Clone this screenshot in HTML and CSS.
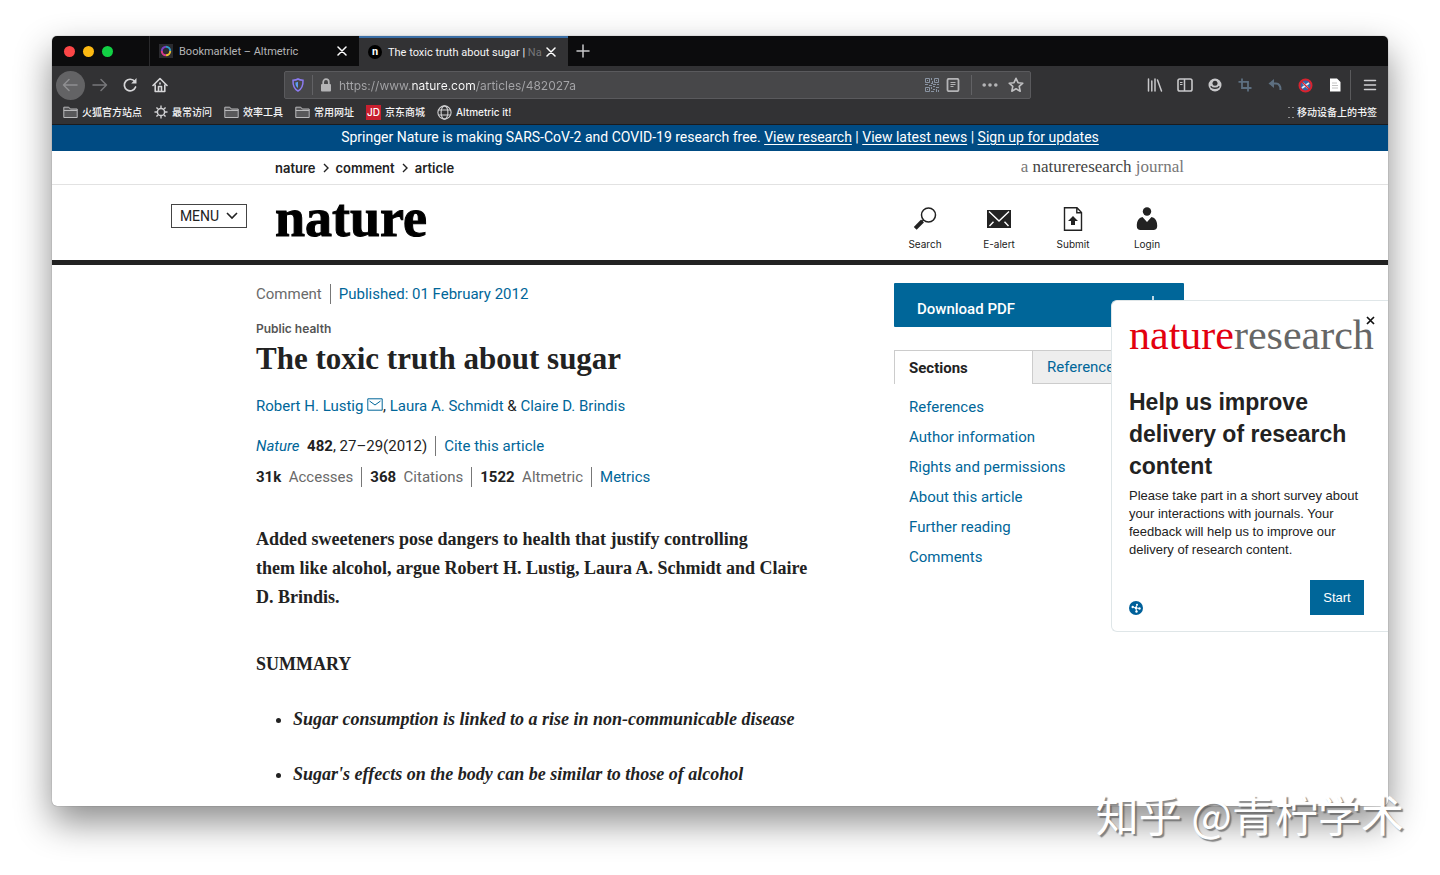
FILE: index.html
```html
<!DOCTYPE html>
<html lang="en">
<head>
<meta charset="utf-8">
<title>The toxic truth about sugar | Nature</title>
<link rel="stylesheet" href="styles.css">
</head>
<body>
<div class="window">
  <div class="tabstrip">
    <div class="lights"><span class="light red"></span><span class="light yellow"></span><span class="light green"></span></div>
    <div class="tab">
      <svg class="favicon" viewBox="0 0 14 14"><rect width="14" height="14" fill="#2b2b2f"/><g fill="none" stroke-width="2"><path d="M7 2.8A4.2 4.2 0 0 1 11.2 7" stroke="#2d9cc9"/><path d="M11.2 7A4.2 4.2 0 0 1 7 11.2" stroke="#e9c130"/><path d="M7 11.2A4.2 4.2 0 0 1 2.8 7" stroke="#d63b8b"/><path d="M2.8 7A4.2 4.2 0 0 1 7 2.8" stroke="#7a3fc0"/></g></svg>
      <button class="tab-title">Bookmarklet – Altmetric</button>
      <button class="close" aria-label="Close tab"><svg width="10" height="10" viewBox="0 0 10 10"><path d="M1 1l8 8M9 1L1 9" stroke="#fff" stroke-width="1.5" stroke-linecap="round"/></svg></button>
    </div>
    <div class="tab active">
      <span class="favicon nature-dot">n</span>
      <button class="tab-title">The toxic truth about sugar | <span class="fade">Na</span></button>
      <button class="close" aria-label="Close tab"><svg width="10" height="10" viewBox="0 0 10 10"><path d="M1 1l8 8M9 1L1 9" stroke="#fff" stroke-width="1.5" stroke-linecap="round"/></svg></button>
    </div>
    <button class="newtab" aria-label="New tab"><svg width="14" height="14" viewBox="0 0 14 14"><path d="M7 1v12M1 7h12" stroke="#c8c8ca" stroke-width="1.5" stroke-linecap="round"/></svg></button>
  </div>

  <div class="toolbar">
    <button class="tool" aria-label="Back"><span class="back"><svg width="16" height="16" viewBox="0 0 16 16" fill="none" stroke="#8f8f91" stroke-width="1.5" stroke-linecap="round" stroke-linejoin="round"><path d="M15 8H1.5M7 2.5L1.5 8 7 13.500"/></svg></span></button>
    <button class="tool" aria-label="Forward"><svg width="16" height="16" viewBox="0 0 16 16" fill="none" stroke="#77777a" stroke-width="1.5" stroke-linecap="round" stroke-linejoin="round"><path d="M1 8h13.500M9 2.500L14.500 8 9 13.500"/></svg></button>
    <button class="tool" aria-label="Reload"><svg width="16" height="16" viewBox="0 0 16 16" fill="none" stroke="#d6d6d8" stroke-width="1.700" stroke-linecap="round"><path d="M12.800 4.600A5.800 5.800 0 1 0 13.600 10"/><path d="M14.500 1v5.500H9.200z" fill="#d6d6d8" stroke="none"/></svg></button>
    <button class="tool" aria-label="Home"><svg width="16" height="16" viewBox="0 0 16 16" fill="none" stroke="#d6d6d8" stroke-width="1.600" stroke-linejoin="round" stroke-linecap="round"><path d="M1 8.500L8 1.500l7 7M3.200 8v6.500h9.600V8"/><path d="M6.500 14V9.500h3V14M8 6v1" /></svg></button>
    <div class="urlbar">
      <svg width="14" height="14" viewBox="0 0 14 14" fill="none"><path d="M7 1c1.600 1 3.300 1.200 5 1.300C12.200 7 11 11 7 13 3 11 1.800 7 2 2.300 3.700 2.200 5.400 2 7 1z" stroke="#8c7bf0" stroke-width="1.500"/><path d="M7 3.800v6.200C5 8.800 4.400 7 4.400 4.500c1-.1 1.800-.3 2.600-.7z" fill="#5c9df5"/></svg>
      <span class="bar"></span>
      <svg width="12" height="14" viewBox="0 0 12 14"><rect x="1" y="6" width="10" height="7.500" rx="1" fill="#b4b4b6"/><path d="M3.200 6V4a2.800 2.800 0 0 1 5.600 0v2" fill="none" stroke="#b4b4b6" stroke-width="1.700"/></svg>
      <input class="url" type="text" aria-label="Address" value="https://www.nature.com/articles/482027a">
      <svg width="14" height="14" viewBox="0 0 14 14" fill="none" stroke="#8a94a3" stroke-width="1"><path d="M.5.500h4v4h-4zM9.500.500h4v4h-4zM.5 9.500h4v4h-4zM2 2.500h1M11 2.500h1M2 11.500h1M6.500 0v2M7.500 3v2M6 5.500h2M0 6.500h3M4 7.500h3M8 6.500h3M12 6.500h2M6.500 9v2M8 8.500h2M11 9.500h3M8 11.500h2M11.500 11v3M6 13.500h3M13.500 12v2"/></svg>
      <svg class="doc" width="14" height="14" viewBox="0 0 14 14" fill="none" stroke="#b4b4b6"><rect x="1.500" y=".8" width="11" height="12.400" rx="1.500" stroke-width="1.800"/><path d="M4.500 4.500h5M4.500 6.500h5M4.500 8.500h3" stroke-width="1.200"/></svg>
      <span class="bar"></span>
      <svg class="dots" width="16" height="14" viewBox="0 0 16 14" fill="#b4b4b6"><circle cx="2.200" cy="7" r="1.800"/><circle cx="8" cy="7" r="1.800"/><circle cx="13.800" cy="7" r="1.800"/></svg>
      <svg width="16" height="16" viewBox="0 0 16 16" fill="none" stroke="#c0c0c2" stroke-width="1.600" stroke-linejoin="round"><path d="M8 1.300l2 4.400 4.800.5-3.600 3.200 1 4.800L8 11.800l-4.200 2.400 1-4.800L1.200 6.200 6 5.700z"/></svg>
    </div>
    <button class="tool" aria-label="Library"><svg width="16" height="14" viewBox="0 0 16 14" fill="none" stroke="#c8c8ca" stroke-width="1.500" stroke-linecap="round"><path d="M1.500 1v12M4.800 3v10M8 1v12M10.500 2l4 11"/></svg></button>
    <button class="tool" aria-label="Sidebars"><svg width="16" height="14" viewBox="0 0 16 14" fill="none" stroke="#c8c8ca"><rect x="1" y="1" width="14" height="12" rx="1.800" stroke-width="1.600"/><path d="M7.500 1v12" stroke-width="1.500"/><path d="M3 4.500h2.500M3 6.500h2.500" stroke-width="1"/></svg></button>
    <button class="tool" aria-label="Account"><svg width="14" height="14" viewBox="0 0 14 14"><circle cx="7" cy="7" r="6.500" fill="#c8c8ca"/><circle cx="7" cy="5.300" r="2.500" fill="#323234"/><path d="M2.800 8.300c1 2.600 7.400 2.600 8.400 0" fill="none" stroke="#323234" stroke-width="1.300"/></svg></button>
    <button class="tool" aria-label="Crop"><svg width="14" height="14" viewBox="0 0 14 14" fill="none" stroke="#5d6f80" stroke-width="1.800"><path d="M4 .5V10h9.500M.5 3.800H10v9.700"/></svg></button>
    <button class="tool" aria-label="Undo"><svg width="14" height="14" viewBox="0 0 14 14"><path d="M6 1L.5 5.500 6 10z" fill="#5d6f80"/><path d="M4 5.500h4c3 0 4.500 2 4.500 6.500" fill="none" stroke="#5d6f80" stroke-width="2"/></svg></button>
    <button class="tool" aria-label="Blocker"><svg width="15" height="15" viewBox="0 0 15 15"><circle cx="7.500" cy="7.500" r="6" fill="#3466a8" stroke="#d8232f" stroke-width="2"/><path d="M4 10l7-5M5 5l5 5" stroke="#e8eef5" stroke-width="1.800"/><path d="M3.500 3.500l8 8" stroke="#d8232f" stroke-width="1.500"/></svg></button>
    <button class="tool" aria-label="Page"><svg width="12" height="14" viewBox="0 0 12 14"><path d="M1 .5h7l3.500 3.500v9.500H1z" fill="#fff"/><path d="M3 5h5M3 7.500h6M3 10h6" stroke="#c2c2c2"/></svg></button>
    <button class="tool menu-tool" aria-label="Menu"><svg width="14" height="12" viewBox="0 0 14 12"><path d="M1.500 1.500h11M1.500 6h11M1.500 10.500h11" stroke="#d0d0d2" stroke-width="1.500" stroke-linecap="round"/></svg></button>
  </div>

  <div class="bookmarks">
    <a href="#"><svg width="15" height="13" viewBox="0 0 15 13" fill="#58585a" stroke="#b9b9bb"><path d="M.8 11.500V1.200h5l1.500 1.800h6.900v8.500zM.8 4.500h13.400"/></svg>火狐官方站点</a>
    <a href="#"><svg width="14" height="14" viewBox="0 0 14 14" fill="none" stroke="#d0d0d2"><circle cx="7" cy="7" r="3.600" stroke-width="1.500"/><path d="M7 .5v2.500M7 11v2.500M.5 7H3M11 7h2.500M2.400 2.400l1.700 1.700M9.900 9.900l1.700 1.700M2.400 11.600l1.700-1.700M9.900 4.100l1.700-1.700" stroke-width="1.400"/></svg>最常访问</a>
    <a href="#"><svg width="15" height="13" viewBox="0 0 15 13" fill="#58585a" stroke="#b9b9bb"><path d="M.8 11.500V1.200h5l1.500 1.800h6.900v8.500zM.8 4.500h13.400"/></svg>效率工具</a>
    <a href="#"><svg width="15" height="13" viewBox="0 0 15 13" fill="#58585a" stroke="#b9b9bb"><path d="M.8 11.500V1.200h5l1.500 1.800h6.900v8.500zM.8 4.500h13.400"/></svg>常用网址</a>
    <a href="#"><span class="jd">JD</span>京东商城</a>
    <a href="#"><svg width="15" height="15" viewBox="0 0 15 15" fill="none" stroke="#d0d0d2" stroke-width="1.100"><circle cx="7.500" cy="7.500" r="6.600"/><ellipse cx="7.500" cy="7.500" rx="3.400" ry="6.600"/><path d="M1.500 5h12M1.500 10h12"/></svg>Altmetric it!</a>
    <a href="#" class="mobile"><svg width="8" height="13" viewBox="0 0 8 13" fill="none" stroke="#8f8f91" stroke-dasharray="2 2"><path d="M1 1.500h6M1 11.500h6"/></svg>移动设备上的书签</a>
  </div>

  <div class="page">
    <div class="banner">Springer Nature is making SARS-CoV-2 and COVID-19 research free. <a href="#">View research</a> | <a href="#">View latest news</a> | <a href="#">Sign up for updates</a></div>

    <div class="crumbbar">
      <div class="wrap crumbs">
        <nav aria-label="Breadcrumb">
          <a href="#">nature</a>
          <svg width="6" height="10" viewBox="0 0 6 10"><path d="M1 1l4 4-4 4" fill="none" stroke="#222" stroke-width="1.400"/></svg>
          <a href="#">comment</a>
          <svg width="6" height="10" viewBox="0 0 6 10"><path d="M1 1l4 4-4 4" fill="none" stroke="#222" stroke-width="1.400"/></svg>
          <a href="#">article</a>
        </nav>
        <span class="journal">a <span class="dark">natureresearch</span> journal</span>
      </div>
    </div>

    <header class="masthead">
      <div class="wrap mast">
        <button class="menu">MENU <svg width="12" height="8" viewBox="0 0 12 8"><path d="M1 1l5 5 5-5" fill="none" stroke="#222" stroke-width="1.600"/></svg></button>
        <a class="logo" href="#">nature</a>
        <nav class="actions" aria-label="Tools">
          <a href="#"><svg width="24" height="24" viewBox="0 0 24 24"><circle cx="15.500" cy="8" r="7" fill="none" stroke="#222" stroke-width="1.500"/><path d="M9.500 14L2.200 21.300" stroke="#222" stroke-width="4"/><path d="M10.800 12.700l-2 2" stroke="#222" stroke-width="1.500"/></svg>Search</a>
          <a href="#"><svg width="24" height="24" viewBox="0 0 24 24"><path d="M0 3h24v18H0z" fill="#222"/><path d="M2 4.500l10 9.500 10-9.500M2.500 19l4-4.200M21.500 19l-4-4.200" fill="none" stroke="#fff" stroke-width="1.400"/></svg>E-alert</a>
          <a href="#"><svg width="24" height="24" viewBox="0 0 24 24"><path d="M3.500.8h12.500l4.500 4.700v17.700h-17zM15.800.8v5h4.700" fill="none" stroke="#222" stroke-width="1.400"/><path d="M12 9l5 5h-3v4h-4v-4H7z" fill="#222"/></svg>Submit</a>
          <a href="#"><svg width="24" height="24" viewBox="0 0 24 24" fill="#222"><circle cx="12" cy="4.500" r="4.200"/><path d="M7.500 10L12 15l4.500-5c4 .8 5.700 4.500 5.700 8.500 0 3.500-1.500 4.500-4.200 4.500H6c-2.700 0-4.200-1-4.200-4.500 0-4 1.700-7.700 5.700-8.500z"/></svg>Login</a>
        </nav>
      </div>
    </header>

    <main class="wrap main">
      <article class="article">
        <div class="meta"><span class="grey">Comment</span><a class="div" href="#">Published: 01 February 2012</a></div>
        <p class="kicker">Public health</p>
        <h1>The toxic truth about sugar</h1>
        <p class="authors"><a href="#">Robert H. Lustig <svg width="16" height="13" viewBox="0 0 16 13" fill="none" stroke="#006699"><path d="M.8.800h14.400v11.400H.8zM2.500 3L8 7l5.500-4"/></svg></a>, <a href="#">Laura A. Schmidt</a> &amp; <a href="#">Claire D. Brindis</a></p>
        <div class="meta cite"><span><a href="#"><i>Nature</i></a>&nbsp; <b>482</b>, 27–29(2012)</span><a class="div" href="#">Cite this article</a></div>
        <div class="meta metrics"><span><b>31k</b>&nbsp; <span class="grey">Accesses</span></span><span class="div"><b>368</b>&nbsp; <span class="grey">Citations</span></span><span class="div"><b>1522</b>&nbsp; <span class="grey">Altmetric</span></span><a class="div" href="#">Metrics</a></div>
        <p class="lead">Added sweeteners pose dangers to health that justify controlling<br>them like alcohol, argue Robert H. Lustig, Laura A. Schmidt and Claire<br>D. Brindis.</p>
        <h2>SUMMARY</h2>
        <ul class="points">
          <li>Sugar consumption is linked to a rise in non-communicable disease</li>
          <li>Sugar's effects on the body can be similar to those of alcohol</li>
        </ul>
      </article>
      <aside class="side">
        <a class="download" href="#">Download PDF <svg width="16" height="26" viewBox="0 0 16 26"><path d="M8 0v18M3 14l5 5 5-5M1 24h14" fill="none" stroke="#fff" stroke-width="1.500"/></svg></a>
        <div class="sidetabs"><button class="on">Sections</button><button>References</button></div>
        <ul class="links">
          <li><a href="#">References</a></li>
          <li><a href="#">Author information</a></li>
          <li><a href="#">Rights and permissions</a></li>
          <li><a href="#">About this article</a></li>
          <li><a href="#">Further reading</a></li>
          <li><a href="#">Comments</a></li>
        </ul>
      </aside>
    </main>

    <section class="survey" aria-label="Survey">
      <div class="brand"><span>nature</span>research</div>
      <button class="dismiss" aria-label="Close"><svg width="9" height="9" viewBox="0 0 9 9"><path d="M1 1l7 7M8 1L1 8" stroke="#111" stroke-width="1.700"/></svg></button>
      <h3>Help us improve<br>delivery of research<br>content</h3>
      <p>Please take part in a short survey about<br>your interactions with journals. Your<br>feedback will help us to improve our<br>delivery of research content.</p>
      <div class="foot">
        <svg width="14" height="14" viewBox="0 0 14 14"><circle cx="7" cy="7" r="7" fill="#00609a"/><path d="M7 7L4 6M7 7l3.500.5M7 7l.5 3M7 7l1-3" stroke="#fff" stroke-width=".8"/><g fill="#fff"><circle cx="7" cy="7" r="1.400"/><circle cx="3.700" cy="6" r="1.200"/><circle cx="10.500" cy="7.500" r="1.200"/><circle cx="7.500" cy="10.500" r="1.200"/><circle cx="8" cy="3.700" r="1"/></g></svg>
        <button class="start">Start</button>
      </div>
    </section>
  </div>
</div>
<div class="watermark" lang="zh">知乎 @青柠学术</div>
</body>
</html>
```

FILE: styles.css
```css
* { box-sizing: border-box; }
body {
  margin: 0;
  padding: 36px 52px 68px;
  position: relative;
  background: #fff;
  color: #222;
  font-family: Roboto, "Noto Sans CJK SC", sans-serif;
  font-size: 15px;
}
button { border: 0; background: none; padding: 0; font: inherit; color: inherit; }
a { color: #006699; text-decoration: none; }
p, h1, h2, h3, ul { margin: 0; padding: 0; }
svg { flex: none; }

.window {
  border-radius: 5px;
  overflow: hidden;
  background: #fff;
  box-shadow: 0 0 1px rgba(0, 0, 0, .6), 0 16px 36px rgba(0, 0, 0, .46);
}

/* tab strip */
.tabstrip { display: flex; height: 30px; background: #0c0c0d; font-size: 11px; }
.lights { display: flex; align-items: center; gap: 8px; width: 98px; padding-left: 12px; border-right: 1px solid #2a2a2c; }
.light { width: 11px; height: 11px; border-radius: 50%; }
.red { background: #fc4647; }
.yellow { background: #fdb912; }
.green { background: #12d144; }
.tab { display: flex; align-items: center; width: 209px; padding: 0 9px; color: #b5b5b7; }
.tab.active { background: #323234; color: #f5f5f6; border-top: 2px solid #3a6ea5; }
.favicon { width: 14px; height: 14px; flex: none; margin-right: 6px; }
.nature-dot { border-radius: 50%; background: #000; color: #fff; text-align: center; font-weight: 700; line-height: 13px; }
.tab-title { flex: 1; white-space: nowrap; text-align: left; }
.fade { color: #77777a; }
.close { display: flex; width: 16px; height: 16px; align-items: center; justify-content: center; }
.newtab { display: flex; align-items: center; justify-content: center; width: 30px; }

/* toolbar */
.toolbar { display: flex; align-items: center; height: 38px; padding-left: 3px; background: #323234; }
.tool { display: flex; align-items: center; justify-content: center; width: 30px; height: 30px; }
.back { display: flex; align-items: center; justify-content: center; width: 29px; height: 29px; border-radius: 50%; background: #636365; }
.menu-tool { width: 38px; border-left: 1px solid #5a5a5c; }
.urlbar {
  flex: 1;
  display: flex;
  align-items: center;
  gap: 7px;
  height: 28px;
  margin: 0 109px;
  padding: 0 6px;
  border: 1px solid #5a5a5d;
  border-radius: 2px;
  background: #474749;
}
.bar { width: 1px; height: 20px; background: #626265; }
.doc { margin-right: 4px; }
.dots { margin: 0 3px; }
.url {
  flex: 1;
  min-width: 0;
  height: 26px;
  border: 0;
  padding: 0;
  outline: 0;
  font-family: Inter, sans-serif;
  font-size: 12px;
  color: transparent;
  background: linear-gradient(90deg, #a5a5a8 73px, #fff 73px 137px, #a5a5a8 137px);
  -webkit-background-clip: text;
  background-clip: text;
}

/* bookmarks */
.bookmarks { display: flex; align-items: center; gap: 12px; height: 21px; padding: 0 11px 4px; background: #323234; border-bottom: 1px solid #1b1b1d; }
.bookmarks a { display: flex; align-items: center; gap: 4px; color: #f5f5f6; font: 500 10px/16px Inter, "Noto Sans CJK SC", sans-serif; }
.bookmarks .mobile { margin-left: auto; gap: 2px; }
.jd { width: 15px; height: 15px; background: #c8202f; color: #fff; text-align: center; line-height: 15px; }

/* page */
.page { position: relative; }
.banner { background: #004b83; color: #fff; text-align: center; font-size: 14px; line-height: 24px; padding-bottom: 2px; }
.banner a { color: #fff; text-decoration: underline; text-underline-offset: 2px; }
.wrap { max-width: 928px; margin: 0 auto; }
.crumbbar { border-bottom: 1px solid #e2e2e2; }
.crumbs { display: flex; justify-content: space-between; align-items: center; height: 33px; padding-left: 19px; }
.crumbs nav { display: flex; align-items: center; gap: 7px; font-family: Inter, sans-serif; font-size: 13px; font-weight: 600; }
.crumbs nav a { color: #222; }
.journal { padding-bottom: 2px; font: 17px/24px "Liberation Serif", serif; color: #777; }
.dark { color: #444; }

.masthead { border-bottom: 5px solid #222; }
.mast { display: flex; align-items: flex-start; height: 75px; }
.menu { display: flex; align-items: center; justify-content: center; gap: 7px; width: 76px; height: 24px; margin: 19px 28px 0 -85px; border: 1px solid #444; font-size: 14px; }
.logo { color: #000; font: 700 54px/66px "Liberation Serif", serif; -webkit-text-stroke: 1px #000; }
.actions { display: flex; margin: 22px 0 0 auto; }
.actions a { display: flex; flex-direction: column; align-items: center; gap: 6px; width: 74px; color: #222; font: 10px/14px Inter, sans-serif; }

.main { display: flex; justify-content: space-between; padding: 18px 0 17px; }
.article { width: 570px; padding-top: 1px; }
.meta { display: flex; line-height: 20px; }
.meta .div { margin-left: 8px; padding-left: 8px; border-left: 1px solid #777; }
.grey { color: #6a6a6a; }
.kicker { margin-top: 15px; color: #555; font: 600 12px/20px Inter, sans-serif; }
h1 { font: 700 31px/40px "Liberation Serif", serif; }
.authors { margin-top: 15px; line-height: 24px; }
.cite { margin-top: 18px; }
.metrics { margin-top: 11px; }
.lead { margin-top: 38px; font: 700 18px/29px "Liberation Serif", serif; white-space: nowrap; }
h2 { margin-top: 38px; font: 700 18px/29px "Liberation Serif", serif; }
.points { padding-left: 37px; font: italic 700 18px/29px "Liberation Serif", serif; white-space: nowrap; }
.points li { margin-top: 26px; }

.side { width: 290px; }
.download { display: flex; justify-content: space-between; align-items: center; height: 44px; padding: 7px 23px 0; background: #006699; color: #fff; font-weight: 500; border-radius: 1px; }
.sidetabs { display: flex; margin-top: 23px; }
.sidetabs button { flex: 1; height: 34px; padding-left: 14px; text-align: left; color: #006699; background: #eee; border: 1px solid #ccc; }
.sidetabs .on { flex: 0 0 138px; color: #222; background: #fff; border-width: 1px 0 0 1px; font-weight: 700; }
.links { margin-top: 8px; padding-left: 15px; list-style: none; line-height: 30px; }

.survey {
  position: absolute;
  top: 175px;
  right: 0;
  width: 277px;
  padding: 10px 24px 16px 17px;
  background: #fff;
  border: 1px solid #dfe6e8;
  border-right: 0;
  border-radius: 6px 0 0 6px;
  font-family: "Liberation Sans", sans-serif;
}
.brand { color: #666; font: 42px/48px "Liberation Serif", serif; white-space: nowrap; }
.brand span { color: #e3000f; }
.dismiss { position: absolute; top: 12px; right: 10px; display: flex; padding: 3px; }
.survey h3 { margin-top: 27px; font-size: 23px; line-height: 32px; white-space: nowrap; }
.survey p { margin-top: 5px; font-size: 13px; line-height: 18px; white-space: nowrap; }
.foot { display: flex; justify-content: space-between; align-items: flex-end; margin-top: 21px; }
.start { width: 54px; height: 35px; background: #006699; color: #fff; font-size: 13px; }

.watermark {
  position: absolute;
  right: 36px;
  bottom: 31px;
  color: #fff;
  font: 43px/60px "Noto Sans CJK SC", sans-serif;
  text-shadow: 2px 2px 1px rgba(90, 90, 90, .7);
}
```
